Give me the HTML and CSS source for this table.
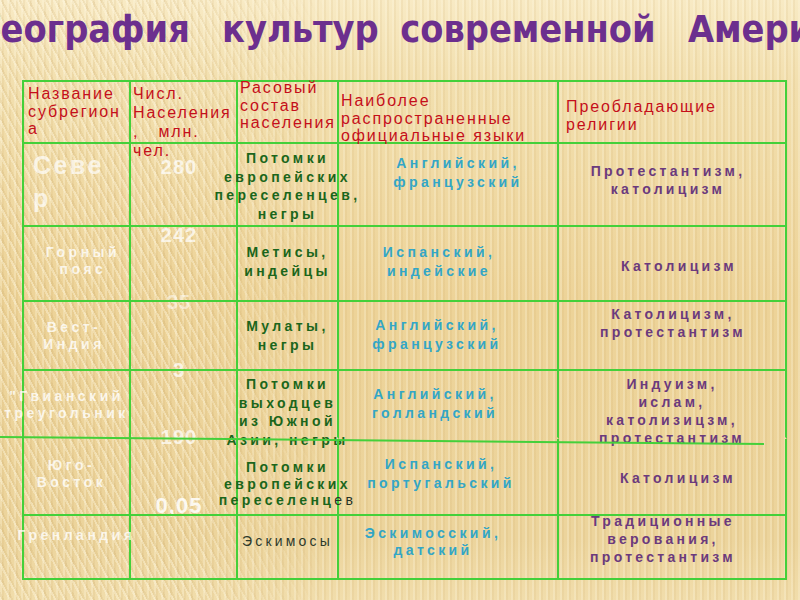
FILE: index.html
```html
<!DOCTYPE html>
<html lang="ru">
<head>
<meta charset="utf-8">
<title>География культур современной Америки</title>
<link rel="stylesheet" href="styles.css">
</head>
<body>
<div class="slide">
  <h1 class="title"><span class="title-text">География   культур  современной   Америки</span></h1>
  <div class="grid">
    <div class="cell hd pl-4 pt-3">Название<br>субрегион<br>а</div>
    <div class="cell hd hd2 pl-2 pt-2">Числ.<br>Населения<br>,&nbsp;&nbsp; млн.<br>чел.</div>
    <div class="cell hd pl-2 pt-0"><div class="up-3">Расовый<br>состав<br>населения</div></div>
    <div class="cell hd pl-2 pt-10">Наиболее<br>распространенные<br>официальные языки</div>
    <div class="cell hd pl-7 pt-16">Преобладающие<br>религии</div>

    <div class="cell reg big pl-9 pt-5">Севе<br>р</div>
    <div class="cell num-cell">
      <div class="nums">
        <span>280</span>
        <span>242</span>
        <span class="faded">35</span>
        <span>3</span>
        <span>190</span>
        <span class="last">0,05</span>
      </div>
    </div>
    <div class="cell race pt-5"><div>Потомки<br>европейских<br>переселенцев,<br>негры</div></div>
    <div class="cell lang pt-10 pl-20"><div>Английский,<br>французский</div></div>
    <div class="cell rel pt-18 pr-8"><div>Протестантизм,<br>католицизм</div></div>

    <div class="cell reg pt-17 pl-13"><div>Горный<br>пояс</div></div>
    <div class="cell"></div>
    <div class="cell race pt-16"><div>Метисы,<br>индейцы</div></div>
    <div class="cell lang pt-16 pr-18"><div>Испанский,<br>индейские</div></div>
    <div class="cell rel pt-30 pl-14"><div>Католицизм</div></div>

    <div class="cell reg pt-17 pr-5"><div>Вест-<br>Индия</div></div>
    <div class="cell"></div>
    <div class="cell race pt-15"><div>Мулаты,<br>негры</div></div>
    <div class="cell lang pt-14 pr-22"><div>Английский,<br>французский</div></div>
    <div class="cell rel pt-3 pl-2"><div>Католицизм,<br>протестантизм</div></div>

    <div class="cell reg pt-17 pr-20 nb"><div>"Гвианский<br>треугольник</div></div>
    <div class="cell nb"></div>
    <div class="cell race pt-4 nb"><div>Потомки<br>выходцев<br>из Южной<br>Азии, негры</div></div>
    <div class="cell lang pt-14 pr-26 nb"><div>Английский,<br>голландский</div></div>
    <div class="cell rel pt-4 nb"><div>Индуизм,<br>ислам,<br>католизицзм,<br>протестантизм</div></div>

    <div class="cell reg pt-18 pr-10"><div>Юго-<br>Восток</div></div>
    <div class="cell"></div>
    <div class="cell race tight pt-20"><div>Потомки<br>европейских<br>переселенц<span class="thin">ев</span></div></div>
    <div class="cell lang pt-16 pr-14"><div>Испанский,<br>португальский</div></div>
    <div class="cell rel pt-30 pl-12"><div>Католицизм</div></div>

    <div class="cell reg pt-11"><div>Гренландия</div></div>
    <div class="cell"></div>
    <div class="cell race thin-cell pt-16"><div>Эскимосы</div></div>
    <div class="cell lang tight pt-9 pr-30"><div>Эскимосский,<br>датский</div></div>
    <div class="cell rel pr-18"><div class="up-4">Традиционные<br>верования,<br>протестантизм</div></div>
  </div>
  <div class="stray-line"></div>
</div>
</body>
</html>
```

FILE: styles.css
```css
html, body {
  margin: 0;
  padding: 0;
}

.slide {
  position: relative;
  width: 800px;
  height: 600px;
  overflow: hidden;
  font-family: "Liberation Sans", Arial, sans-serif;
  background-color: #edd59e;
  background-image:
    repeating-linear-gradient(90deg, rgba(255, 250, 230, 0.24) 0 2px, rgba(190, 150, 80, 0.10) 2px 4px, rgba(255, 255, 255, 0) 4px 7px),
    linear-gradient(180deg, #f8eac4 0%, #f2dfae 14%, #edd398 50%, #ecd49c 90%, #f1ddab 100%);
}

.slide::before {
  content: "";
  position: absolute;
  left: 0;
  top: 0;
  width: 330px;
  height: 600px;
  background-image: repeating-linear-gradient(62deg, rgba(255, 248, 225, 0.35) 0 2px, rgba(190, 150, 80, 0.12) 2px 4px, rgba(255, 255, 255, 0) 4px 8px);
  -webkit-mask-image: linear-gradient(90deg, #000 0%, #000 55%, transparent 100%);
  mask-image: linear-gradient(90deg, #000 0%, #000 55%, transparent 100%);
}

.title {
  position: relative;
  margin: 0;
  height: 80px;
  line-height: 58px;
  font-family: "Liberation Sans Narrow", "DejaVu Sans Condensed", "Liberation Sans", sans-serif;
  font-stretch: condensed;
  font-weight: bold;
  font-size: 37.5px;
  color: #6c2f8e;
  white-space: pre;
}

.title-text {
  display: inline-block;
  margin-left: -21px;
  word-spacing: -1px;
}

.grid {
  position: relative;
  margin-left: 22px;
  display: grid;
  grid-template-columns: 107px 107px 101px 220px 228px;
  grid-template-rows: 62px 83px 75px 69px 68px 77px 64px;
  width: max-content;
  border-top: 2px solid #44d03a;
  border-left: 2px solid #44d03a;
}

.cell {
  box-sizing: border-box;
  border-right: 2px solid #44d03a;
  border-bottom: 2px solid #44d03a;
  white-space: nowrap;
  min-width: 0;
}

.cell.nb {
  border-bottom-color: transparent;
}

.hd {
  color: #c50f1a;
  font-size: 16px;
  line-height: 17.5px;
  letter-spacing: 1.9px;
}

.hd2 {
  line-height: 19px;
}

.reg,
.race,
.lang,
.rel {
  display: flex;
  flex-direction: column;
  align-items: center;
  text-align: center;
  font-weight: bold;
  font-size: 14px;
}

.reg {
  color: rgba(255, 255, 255, 0.78);
  line-height: 17px;
  letter-spacing: 3.5px;
}

.reg.big {
  display: block;
  font-size: 25px;
  line-height: 33px;
  letter-spacing: 2.5px;
  text-align: left;
  color: rgba(255, 255, 255, 0.7);
}

.race {
  color: #1b661b;
  line-height: 18.5px;
  letter-spacing: 3.4px;
}

.race.tight {
  line-height: 16.5px;
}

.thin {
  font-weight: normal;
  color: #263326;
}

.race.thin-cell {
  font-weight: normal;
  color: #2e3a2c;
  letter-spacing: 3.2px;
}

.lang {
  color: #33a6c6;
  line-height: 18.5px;
  letter-spacing: 3.4px;
}

.lang.tight {
  line-height: 17px;
}

.rel {
  color: #6b3a7d;
  line-height: 18px;
  letter-spacing: 3.3px;
}

.nums {
  margin-top: -10px;
  padding-right: 9px;
  display: flex;
  flex-direction: column;
  align-items: center;
  color: rgba(255, 255, 255, 0.72);
  font-weight: bold;
  font-size: 20px;
  letter-spacing: 1px;
}

.nums span {
  display: block;
  height: 67.6px;
  line-height: 67.6px;
}

.nums .faded {
  color: rgba(255, 255, 255, 0.5);
}

.nums .last {
  font-size: 22px;
  color: rgba(255, 255, 255, 0.85);
}

.stray-line {
  position: absolute;
  left: 0;
  top: 436px;
  width: 764px;
  height: 2px;
  background: #44d03a;
  transform-origin: 0 0;
  transform: rotate(0.53deg);
}

.up-3 { margin-top: -3px; }
.up-4 { margin-top: -4px; }

.pt-0 { padding-top: 0; }
.pt-2 { padding-top: 2px; }
.pt-3 { padding-top: 3px; }
.pt-4 { padding-top: 4px; }
.pt-5 { padding-top: 5px; }
.pt-9 { padding-top: 9px; }
.pt-10 { padding-top: 10px; }
.pt-11 { padding-top: 11px; }
.pt-14 { padding-top: 14px; }
.pt-15 { padding-top: 15px; }
.pt-16 { padding-top: 16px; }
.pt-17 { padding-top: 17px; }
.pt-18 { padding-top: 18px; }
.pt-20 { padding-top: 20px; }
.pt-30 { padding-top: 30px; }

.pl-2 { padding-left: 2px; }
.pl-4 { padding-left: 4px; }
.pl-7 { padding-left: 7px; }
.pl-9 { padding-left: 9px; }
.pl-12 { padding-left: 12px; }
.pl-13 { padding-left: 13px; }
.pl-14 { padding-left: 14px; }
.pl-20 { padding-left: 20px; }

.pr-5 { padding-right: 5px; }
.pr-8 { padding-right: 8px; }
.pr-10 { padding-right: 10px; }
.pr-14 { padding-right: 14px; }
.pr-18 { padding-right: 18px; }
.pr-20 { padding-right: 20px; }
.pr-22 { padding-right: 22px; }
.pr-26 { padding-right: 26px; }
.pr-30 { padding-right: 30px; }
```
